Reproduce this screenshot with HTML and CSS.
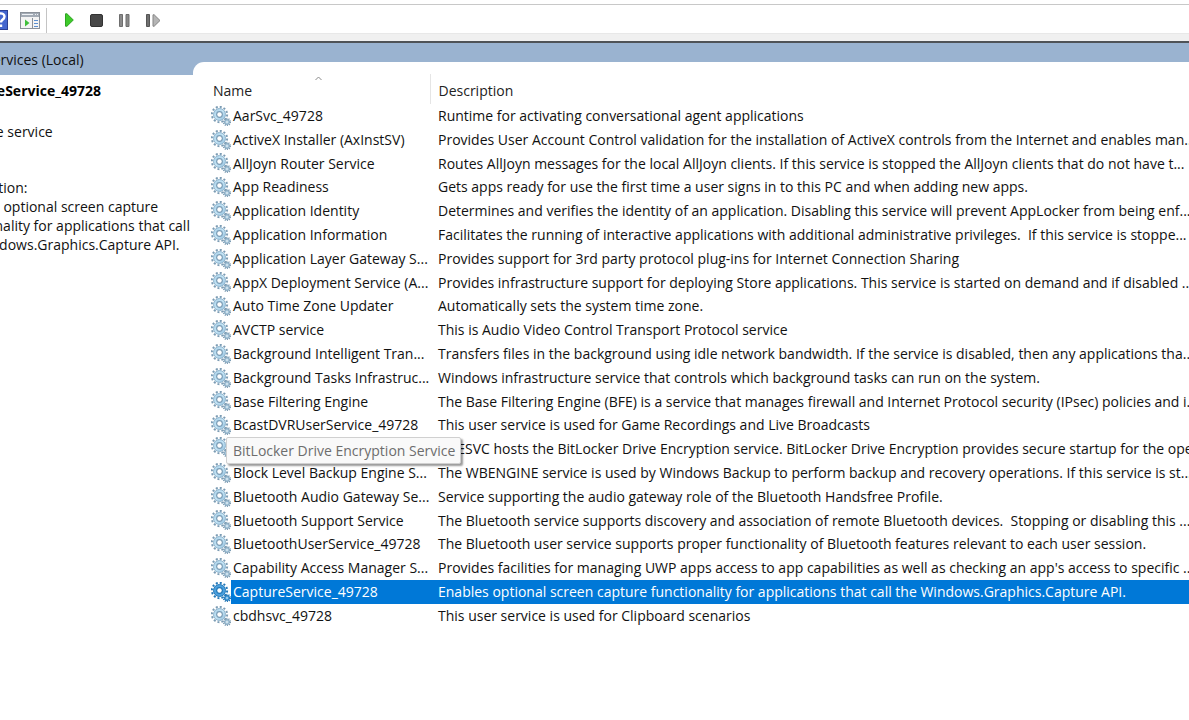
FILE: index.html
```
<!DOCTYPE html>
<html lang="en">

<head>
    <meta charset="UTF-8" />
    <meta name="viewport" content="width=device-width, initial-scale=1.0" />
    <title>Services</title>
    <link rel="stylesheet" href="styles.css">
</head>

<body>
    <svg class="symbols" aria-hidden="true">
        <defs>
            <linearGradient id="gearFill" x1="0" y1="0" x2="1" y2="1">
                <stop offset="0" stop-color="#a5cde6" />
                <stop offset="0.5" stop-color="#c4e4f5" />
                <stop offset="1" stop-color="#8fbcdb" />
            </linearGradient>
            <symbol id="gear" viewBox="0 0 20 20">
                <circle class="teeth" cx="8.500" cy="8.500" r="7.640" />
                <circle class="body" cx="8.500" cy="8.500" r="6.000" />
                <circle class="ring" cx="8.500" cy="8.500" r="3.400" />
                <circle class="hole" cx="8.500" cy="8.500" r="2.200" />
                <circle class="small-teeth" cx="16" cy="16" r="3.180" />
                <circle class="small-body" cx="16" cy="16" r="2.500" />
                <circle class="hole" cx="16" cy="16" r="0.800" />
            </symbol>
        </defs>
    </svg>

    <header class="toolbar">
        <button class="tool help" aria-label="Help">
            <svg width="18" height="20" viewBox="0 0 18 20">
                <rect x="0.500" y="0.500" width="17" height="19" fill="#4466cf" stroke="#2b3f94" />
                <path d="M7 7c0-5 7.500-4.500 7.500-.5 0 3-3.500 3-3.500 6M11 14.500v2.500" fill="none" stroke="#fff" stroke-width="2.400" />
            </svg>
        </button>
        <button class="tool" aria-label="Show action pane">
            <svg width="20" height="17" viewBox="0 0 20 17">
                <rect x="0.500" y="0.500" width="19" height="16" fill="#f4f4f4" stroke="#8b9199" />
                <path d="M1 1h18v4H1z" fill="#a3abb5" />
                <path d="M2 2.500h11M15 2.500h1M17 2.500h1" stroke="#eef1f5" />
                <path d="M12.500 6v10" stroke="#8b9199" />
                <path d="M5 7.500l4.500 3.500L5 14.500z" fill="#3fbf3a" />
                <path d="M14 8.500h4M14 11.500h4M14 14.500h4" stroke="#5b8fd0" />
            </svg>
        </button>
        <span class="separator"></span>
        <button class="tool start" aria-label="Start service">
            <svg width="9" height="14" viewBox="0 0 9 14"><path d="M0.500 0.800h1.500L8.300 7 2 13.200H0.500z" fill="#3ecb2b" stroke="#2fa324" /></svg>
        </button>
        <button class="tool" aria-label="Stop service">
            <svg width="13" height="13" viewBox="0 0 13 13"><rect x="0.500" y="0.500" width="12" height="12" rx="1.500" fill="#484848" stroke="#333" /></svg>
        </button>
        <button class="tool" aria-label="Pause service">
            <svg width="11" height="13" viewBox="0 0 11 13"><path d="M0.500 0.500h3v12h-3zM7 0.500h3v12H7z" fill="#8a8a8a" stroke="#6e6e6e" /></svg>
        </button>
        <button class="tool" aria-label="Restart service">
            <svg width="15" height="13" viewBox="0 0 15 13">
                <path d="M0.500 0.500h3v12h-3z" fill="#6f6f6f" stroke="#555" />
                <path d="M7 0.800h1.200L14 6.500 8.200 12.200H7z" fill="#b5b5b5" stroke="#858585" />
            </svg>
        </button>
    </header>

    <main class="console">
        <h1 class="title">Services (Local)</h1>
        <aside class="details">
            <h2>CaptureService_49728</h2>
            <p class="action">Stop the service</p>
            <p>Description:<br>Enables optional screen capture<br>functionality for applications that call<br>the Windows.Graphics.Capture API.</p>
        </aside>
        <section class="list">
            <table>
                <thead>
                    <tr>
                        <th class="name">Name<svg class="sort" width="7" height="5" viewBox="0 0 7 5"><path d="M0.500 4L3.500 1l3 3" fill="none" stroke="#8a8a8a" /></svg></th>
                        <th>Description</th>
                    </tr>
                </thead>
                <tbody>
                    <tr><td><svg class="gear"><use href="#gear" /></svg><span>AarSvc_49728</span></td><td>Runtime for activating conversational agent applications</td></tr>
                    <tr><td><svg class="gear"><use href="#gear" /></svg><span>ActiveX Installer (AxInstSV)</span></td><td>Provides User Account Control validation for the installation of ActiveX controls from the Internet and enables man...</td></tr>
                    <tr><td><svg class="gear"><use href="#gear" /></svg><span>AllJoyn Router Service</span></td><td>Routes AllJoyn messages for the local AllJoyn clients. If this service is stopped the AllJoyn clients that do not have t...</td></tr>
                    <tr><td><svg class="gear"><use href="#gear" /></svg><span>App Readiness</span></td><td>Gets apps ready for use the first time a user signs in to this PC and when adding new apps.</td></tr>
                    <tr><td><svg class="gear"><use href="#gear" /></svg><span>Application Identity</span></td><td>Determines and verifies the identity of an application. Disabling this service will prevent AppLocker from being enf...</td></tr>
                    <tr><td><svg class="gear"><use href="#gear" /></svg><span>Application Information</span></td><td>Facilitates the running of interactive applications with additional administrative privileges.&nbsp; If this service is stoppe...</td></tr>
                    <tr><td><svg class="gear"><use href="#gear" /></svg><span>Application Layer Gateway S...</span></td><td>Provides support for 3rd party protocol plug-ins for Internet Connection Sharing</td></tr>
                    <tr><td><svg class="gear"><use href="#gear" /></svg><span>AppX Deployment Service (A...</span></td><td>Provides infrastructure support for deploying Store applications. This service is started on demand and if disabled ...</td></tr>
                    <tr><td><svg class="gear"><use href="#gear" /></svg><span>Auto Time Zone Updater</span></td><td>Automatically sets the system time zone.</td></tr>
                    <tr><td><svg class="gear"><use href="#gear" /></svg><span>AVCTP service</span></td><td>This is Audio Video Control Transport Protocol service</td></tr>
                    <tr><td><svg class="gear"><use href="#gear" /></svg><span>Background Intelligent Tran...</span></td><td>Transfers files in the background using idle network bandwidth. If the service is disabled, then any applications tha...</td></tr>
                    <tr><td><svg class="gear"><use href="#gear" /></svg><span>Background Tasks Infrastruc...</span></td><td>Windows infrastructure service that controls which background tasks can run on the system.</td></tr>
                    <tr><td><svg class="gear"><use href="#gear" /></svg><span>Base Filtering Engine</span></td><td>The Base Filtering Engine (BFE) is a service that manages firewall and Internet Protocol security (IPsec) policies and i...</td></tr>
                    <tr><td><svg class="gear"><use href="#gear" /></svg><span>BcastDVRUserService_49728</span></td><td>This user service is used for Game Recordings and Live Broadcasts</td></tr>
                    <tr><td class="hovered"><svg class="gear"><use href="#gear" /></svg><span class="tooltip" role="tooltip">BitLocker Drive Encryption Service</span></td><td>BDESVC hosts the BitLocker Drive Encryption service. BitLocker Drive Encryption provides secure startup for the ope...</td></tr>
                    <tr><td><svg class="gear"><use href="#gear" /></svg><span>Block Level Backup Engine S...</span></td><td>The WBENGINE service is used by Windows Backup to perform backup and recovery operations. If this service is st...</td></tr>
                    <tr><td><svg class="gear"><use href="#gear" /></svg><span>Bluetooth Audio Gateway Se...</span></td><td>Service supporting the audio gateway role of the Bluetooth Handsfree Profile.</td></tr>
                    <tr><td><svg class="gear"><use href="#gear" /></svg><span>Bluetooth Support Service</span></td><td>The Bluetooth service supports discovery and association of remote Bluetooth devices.&nbsp; Stopping or disabling this ...</td></tr>
                    <tr><td><svg class="gear"><use href="#gear" /></svg><span>BluetoothUserService_49728</span></td><td>The Bluetooth user service supports proper functionality of Bluetooth features relevant to each user session.</td></tr>
                    <tr><td><svg class="gear"><use href="#gear" /></svg><span>Capability Access Manager S...</span></td><td>Provides facilities for managing UWP apps access to app capabilities as well as checking an app's access to specific ...</td></tr>
                    <tr class="selected"><td><svg class="gear"><use href="#gear" /></svg><span>CaptureService_49728</span></td><td>Enables optional screen capture functionality for applications that call the Windows.Graphics.Capture API.</td></tr>
                    <tr><td><svg class="gear"><use href="#gear" /></svg><span>cbdhsvc_49728</span></td><td>This user service is used for Clipboard scenarios</td></tr>
                </tbody>
            </table>
        </section>
    </main>
</body>

</html>
```
FILE: styles.css
```
* {
    margin: 0;
    padding: 0;
    box-sizing: border-box;
}

body {
    font-family: "Open Sans", "Segoe UI", sans-serif;
    font-size: 14px;
    color: #111;
    background-color: #fff;
    overflow: hidden;
}

.symbols {
    position: absolute;
    width: 0;
    height: 0;
}

.toolbar {
    display: flex;
    align-items: center;
    gap: 16px;
    height: 43px;
    padding-bottom: 3px;
    background: linear-gradient(#fff 4px, #c8c8c8 4px, #c8c8c8 5px, #fff 5px, #fff 33px, #e0e0e0 33px, #f0f0f0 34px, #f0f0f0 41px, #4f5357 41px);
}

.tool {
    display: flex;
    border: none;
    background: none;
}

.tool.help {
    margin-left: -10px;
    margin-right: -4px;
}

.tool.start {
    margin-left: 2px;
}

.separator {
    width: 1px;
    height: 25px;
    margin-left: -10px;
    background-color: #c4c4c4;
}

.console {
    display: grid;
    grid-template-columns: 193px minmax(0, 1fr);
    grid-template-rows: 32px auto;
    background: linear-gradient(#9ab3d0 32px, #fff 32px);
}

.title {
    font-size: 14px;
    font-weight: 400;
    line-height: 34px;
    white-space: nowrap;
    margin-left: -15px;
}

.details {
    grid-row: 2;
    margin-left: -51px;
    padding-top: 6px;
    line-height: 19px;
    white-space: nowrap;
}

.details h2 {
    font-size: 14px;
    font-weight: 700;
    color: #000;
}

.action {
    margin: 22px 0 37px;
}

.list {
    grid-column: 2;
    grid-row: 1 / 3;
    margin-top: 19px;
    padding: 12px 0 0 18px;
    background-color: #fff;
    border-top-left-radius: 11px;
}

table {
    width: 100%;
    table-layout: fixed;
    border-collapse: collapse;
    line-height: 1.7;
}

th {
    position: relative;
    height: 30px;
    padding: 3px 0 0 8px;
    font-weight: 400;
    text-align: left;
    color: #222;
}

th.name {
    width: 219px;
    padding-left: 2px;
    border-right: 1px solid #e5e5e5;
}

.sort {
    position: absolute;
    top: 2px;
    left: 104px;
}

td {
    white-space: nowrap;
    overflow: hidden;
}

td:first-child {
    display: flex;
    align-items: center;
}

td:first-child span {
    padding-left: 2px;
}

td:last-child {
    padding-left: 8px;
}

.gear {
    flex: none;
    width: 20px;
    height: 20px;
}

.teeth,
.small-teeth {
    fill: none;
    stroke: var(--gear-edge, #7c9cb4);
    stroke-width: 2;
    stroke-dasharray: 2 2;
}

.small-teeth {
    stroke-dasharray: 1 1;
}

.body {
    fill: var(--gear-fill, url(#gearFill));
    stroke: var(--gear-edge, #8fb4cd);
}

.small-body {
    fill: var(--gear-fill, #a9c9dd);
    stroke: var(--gear-edge, #8aa9bf);
}

.ring {
    fill: var(--gear-edge, #7b9db7);
}

.hole {
    fill: #fff;
}

/* the selected row tints its icon as well */
.selected .gear {
    --gear-fill: #4ba0de;
    --gear-edge: #2478b8;
}

.selected td:last-child,
.selected span {
    color: #fff;
    background-color: #0078d7;
}

.selected span {
    flex: 1;
}

td.hovered {
    position: relative;
    overflow: visible;
}

td.hovered .tooltip {
    position: absolute;
    top: 0;
    left: 15px;
    z-index: 1;
    padding: 0 5px 0 6px;
    line-height: 25px;
    color: #6d6d6d;
    background-color: #f9f9f9;
    border: 1px solid #d0d0d0;
    border-radius: 2px;
    box-shadow: 2px 2px 2px rgba(0, 0, 0, 0.4);
}
```
